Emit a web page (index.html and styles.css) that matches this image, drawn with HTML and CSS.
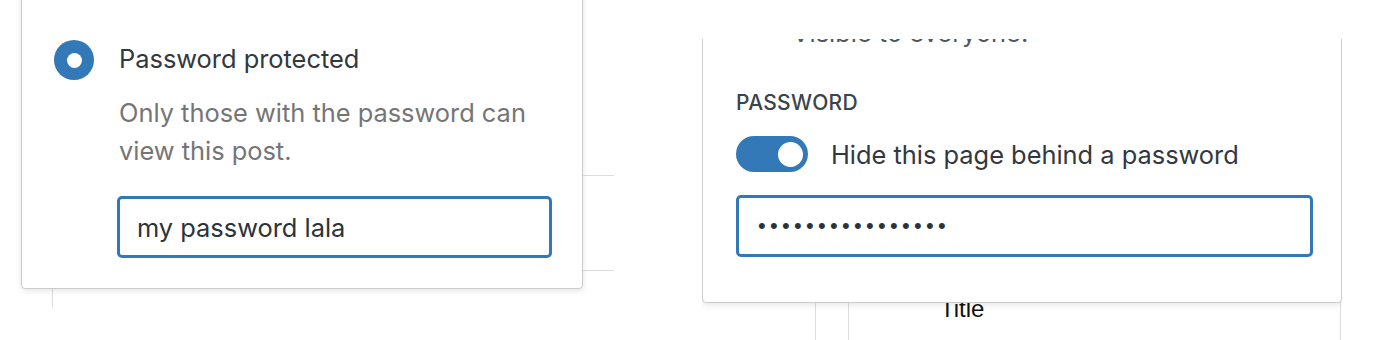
FILE: index.html
```html
<!DOCTYPE html>
<html lang="en">
<head>
<meta charset="utf-8">
<title>Password settings</title>
<link rel="stylesheet" href="styles.css">
</head>
<body>
<main class="stage">
  <section class="pane pane-left">
    <div class="left-col">
      <div class="popover popover-left">
        <div class="option">
          <span class="radio"></span>
          <div class="option-body">
            <div class="option-title">Password protected</div>
            <p class="option-desc">Only those with the password can view this post.</p>
            <div class="field field-left">my password lala</div>
          </div>
        </div>
      </div>
      <div class="stub"></div>
    </div>
    <div class="edge">
      <div class="edge-line edge-line-a"></div>
      <div class="edge-line edge-line-b"></div>
    </div>
  </section>

  <section class="pane pane-right">
    <div class="clip">
      <div class="popover popover-right">
        <p class="visible">Visible to everyone.</p>
        <div class="label">PASSWORD</div>
        <div class="toggle-row">
          <span class="toggle"><span class="knob"></span></span>
          <span class="toggle-text">Hide this page behind a password</span>
        </div>
        <div class="field field-right"><span class="dots">••••••••••••••••</span></div>
      </div>
    </div>
    <div class="table-below">
      <div class="cell cell-narrow"></div>
      <div class="cell cell-title">Title</div>
    </div>
  </section>
</main>
</body>
</html>
```

FILE: styles.css
```css
* { box-sizing: border-box; }

html, body {
  margin: 0;
  padding: 0;
  background: #ffffff;
}

body {
  width: 1377px;
  height: 340px;
  overflow: hidden;
  font-family: Inter, "Noto Sans", sans-serif;
  color: #3c434a;
}

.stage {
  display: flex;
  align-items: flex-start;
}

/* ---------- left pane ---------- */
.pane-left {
  display: flex;
  align-items: flex-start;
  width: 614px;
}

.left-col {
  margin-left: 21px;
  width: 562px;
  display: flex;
  flex-direction: column;
}

.popover {
  background: #ffffff;
  border: 1px solid #cccccc;
  border-radius: 4px;
  box-shadow: 0 2px 6px rgba(0, 0, 0, 0.10);
  position: relative;
  z-index: 2;
}

.popover-left {
  margin-top: -10px;
  padding: 49px 30px 30px 32px;
}

.option {
  display: flex;
  align-items: flex-start;
  gap: 25px;
}

.radio {
  flex: none;
  width: 40px;
  height: 40px;
  border-radius: 50%;
  background: #3379b7;
  display: flex;
  align-items: center;
  justify-content: center;
}

.radio::after {
  content: "";
  width: 15px;
  height: 15px;
  border-radius: 50%;
  background: #ffffff;
}

.option-body {
  flex: 1;
  min-width: 0;
}

.option-title {
  font-size: 25.4px;
  line-height: 40px;
  color: #32383e;
  margin-top: -1px;
}

.option-desc {
  margin: 15px 0 0;
  font-size: 25.4px;
  line-height: 38px;
  color: #757575;
}

.field {
  border: 3px solid #3379b7;
  border-radius: 5px;
  height: 62px;
  display: flex;
  align-items: center;
  background: #ffffff;
}

.field-left {
  margin-top: 26px;
  margin-left: -2px;
  padding-left: 17px;
  font-size: 25.4px;
  color: #2c3338;
}

.stub {
  margin-left: 31px;
  width: 1px;
  height: 19px;
  background: #dddddd;
}

.edge {
  width: 31px;
  display: flex;
  flex-direction: column;
}

.edge-line {
  height: 1px;
  background: #dddddd;
}

.edge-line-a { margin-top: 175px; }
.edge-line-b { margin-top: 94px; }

/* ---------- right pane ---------- */
.pane-right {
  margin-left: 88px;
  width: 640px;
  display: flex;
  flex-direction: column;
}

.clip {
  margin-top: 39px;
  overflow: hidden;
  position: relative;
  z-index: 2;
  padding: 0 0 8px;
  margin-bottom: -8px;
}

.popover-right {
  margin-top: -10px;
  padding: 0 28px 45px 33px;
}

.visible {
  margin: -16px 0 0 56px;
  font-size: 25.4px;
  line-height: 38px;
  color: #50575e;
}

.label {
  margin-top: 39px;
  font-size: 21px;
  line-height: 24px;
  font-weight: 500;
  letter-spacing: 0.3px;
  color: #3c434a;
}

.toggle-row {
  margin-top: 21px;
  display: flex;
  align-items: center;
  gap: 23px;
  height: 36px;
}

.toggle {
  flex: none;
  width: 72px;
  height: 36px;
  border-radius: 18px;
  background: #3379b7;
  display: flex;
  align-items: center;
  justify-content: flex-end;
  padding-right: 5px;
}

.knob {
  width: 25px;
  height: 25px;
  border-radius: 50%;
  background: #ffffff;
}

.toggle-text {
  font-size: 25.4px;
  color: #32383e;
}

.field-right {
  margin-top: 23px;
  padding-left: 19px;
}

.dots {
  font-family: "Liberation Sans", Arial, sans-serif;
  font-size: 22px;
  letter-spacing: 4.3px;
  color: #2c3338;
}

.table-below {
  margin-left: 113px;
  margin-top: -8px;
  display: flex;
  height: 60px;
  border-left: 1px solid #dddddd;
}

.cell-narrow {
  width: 33px;
  border-right: 1px solid #dddddd;
}

.cell-title {
  width: 492px;
  border-right: 1px solid #dddddd;
  padding-left: 91px;
  font-family: "Liberation Sans", Arial, sans-serif;
  font-size: 24px;
  line-height: 28px;
  color: #111111;
}
```
